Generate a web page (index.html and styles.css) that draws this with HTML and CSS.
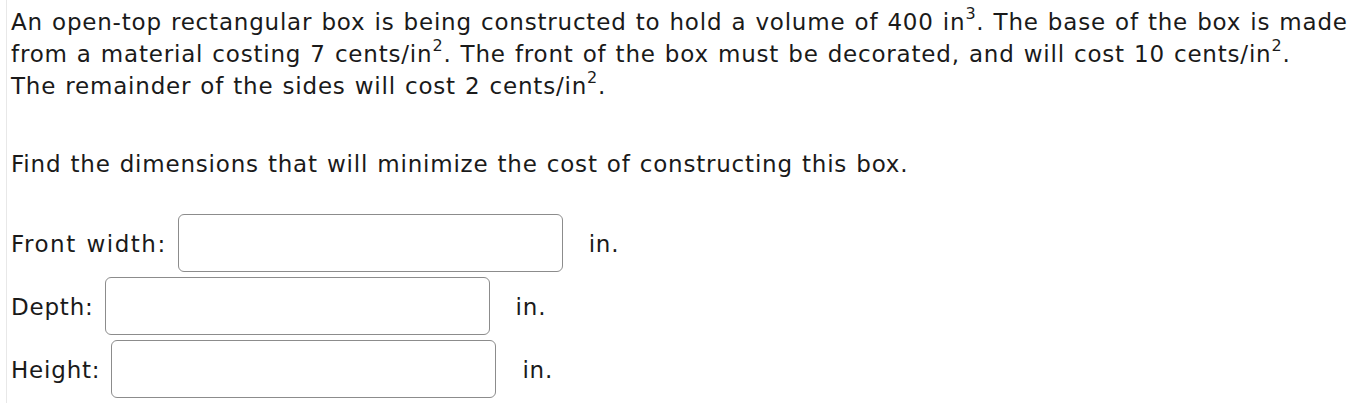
FILE: index.html
```html
<!DOCTYPE html>
<html lang="en">
<head>
<meta charset="utf-8">
<title>Box problem</title>
<link rel="stylesheet" href="styles.css">
</head>
<body>
<div class="problem">
  <p class="text">An open-top rectangular box is being constructed to hold a volume of 400 in<sup>3</sup>. The base of the box is made<br>from a material costing 7 cents/in<sup>2</sup>. The front of the box must be decorated, and will cost 10 cents/in<sup>2</sup>.<br>The remainder of the sides will cost 2 cents/in<sup>2</sup>.</p>
  <p class="text find">Find the dimensions that will minimize the cost of constructing this box.</p>
  <div class="answers">
    <div class="row">
      <label class="label label-wide" for="fw">Front width:</label>
      <input class="field" id="fw" type="text">
      <span class="unit">in.</span>
    </div>
    <div class="row">
      <label class="label" for="dp">Depth:</label>
      <input class="field" id="dp" type="text">
      <span class="unit">in.</span>
    </div>
    <div class="row">
      <label class="label" for="ht">Height:</label>
      <input class="field" id="ht" type="text">
      <span class="unit">in.</span>
    </div>
  </div>
</div>
</body>
</html>
```
FILE: styles.css
```css
html, body {
  margin: 0;
  padding: 0;
  background: #ffffff;
}

body {
  font-family: "DejaVu Sans", "Noto Sans", sans-serif;
  font-size: 23px;
  letter-spacing: 0.8px;
  word-spacing: 1px;
  color: #1a1a1a;
}

.problem {
  margin-left: 6px;
  width: 1366px;
  height: 403px;
  box-sizing: border-box;
  border-left: 1px solid #e8e8e8;
  padding: 6px 0 0 4px;
}

.text {
  margin: 0;
  line-height: 32px;
  white-space: nowrap;
}

.text sup {
  font-size: 16px;
  line-height: 0;
  vertical-align: 11px;
}

.find {
  margin-top: 46px;
}

.answers {
  margin-top: 34px;
  display: flex;
  flex-direction: column;
  gap: 5px;
}

.row {
  display: flex;
  align-items: center;
  height: 58px;
}

.label {
  margin-right: 11px;
  padding-top: 2px;
}

.label-wide {
  letter-spacing: 1.5px;
}

.field {
  width: 385px;
  height: 58px;
  box-sizing: border-box;
  border: 1.5px solid #8c8c8c;
  border-radius: 6px;
  background: #ffffff;
  margin: 0 26px 0 0;
  padding: 0 8px;
  font: inherit;
}

.unit {
  padding-top: 2px;
}
```
